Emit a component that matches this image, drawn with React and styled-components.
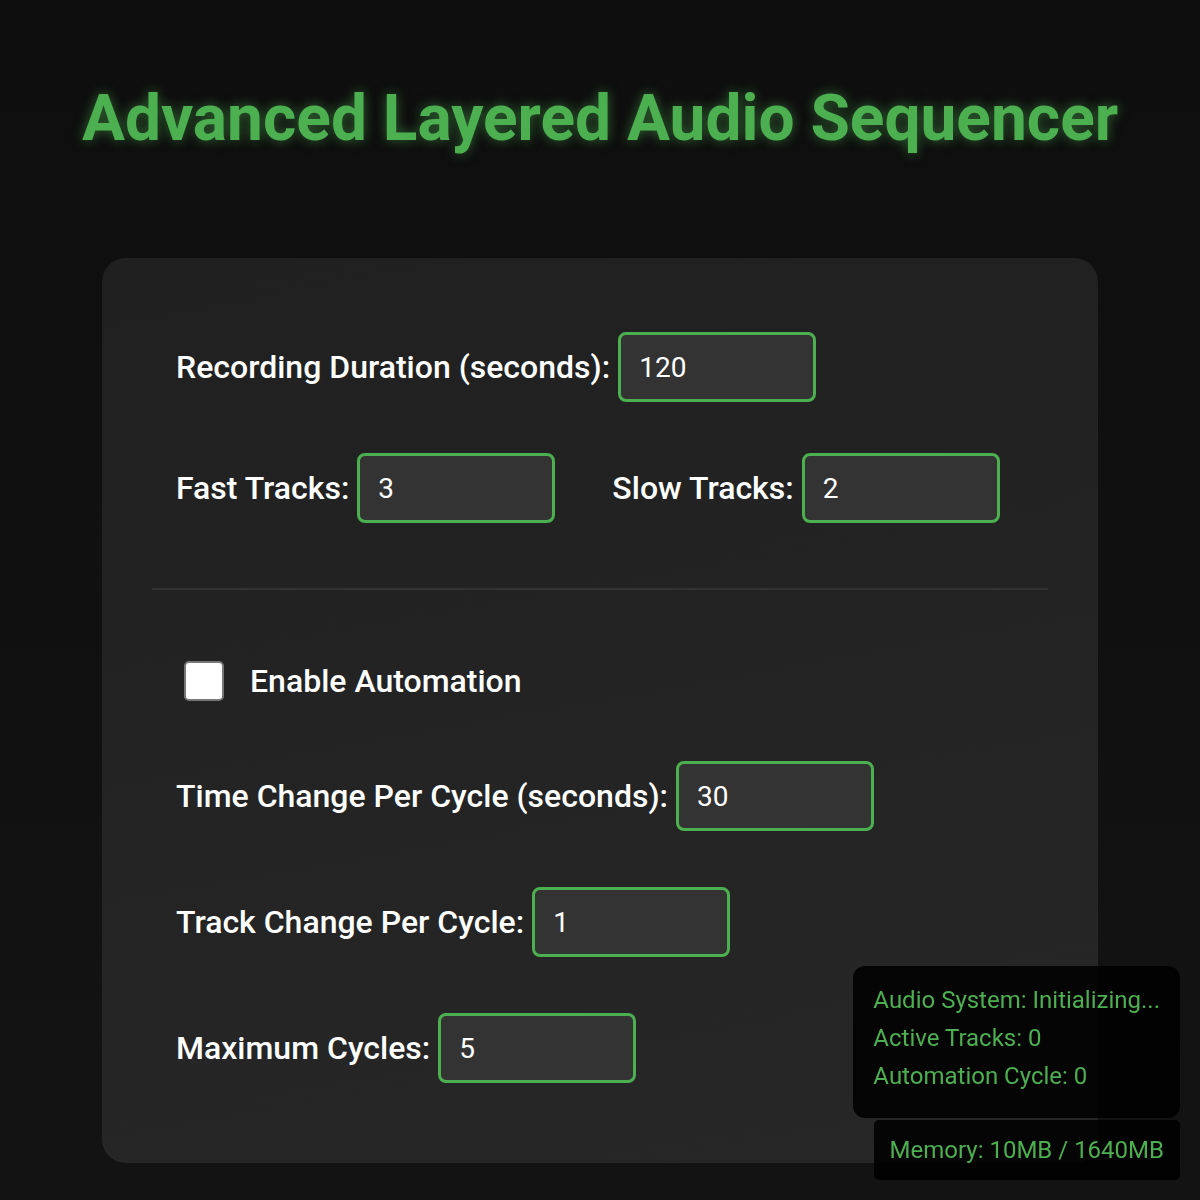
import React, { useState } from 'react'
import styled, { createGlobalStyle } from 'styled-components'

const GlobalStyle = createGlobalStyle`
  html, body {
    margin: 0;
    padding: 0;
    background: #111;
    font-family: Roboto, "Liberation Sans", sans-serif;
  }
  * { box-sizing: border-box; }
`

export default function App() {
  const [duration, setDuration] = useState('120')
  const [fast, setFast] = useState('3')
  const [slow, setSlow] = useState('2')
  const [automation, setAutomation] = useState(false)
  const [timeChange, setTimeChange] = useState('30')
  const [trackChange, setTrackChange] = useState('1')
  const [maxCycles, setMaxCycles] = useState('5')

  return (
    <Page>
      <GlobalStyle />
      <Title>Advanced Layered Audio Sequencer</Title>
      <Panel>
        <Section>
          <Row>
            <Field>
              <Label>Recording Duration (seconds):</Label>
              <NumberInput type="number" value={duration} onChange={e => setDuration(e.target.value)} />
            </Field>
          </Row>
          <Row $gap={57}>
            <Field>
              <Label>Fast Tracks:</Label>
              <NumberInput type="number" value={fast} onChange={e => setFast(e.target.value)} />
            </Field>
            <Field>
              <Label>Slow Tracks:</Label>
              <NumberInput type="number" value={slow} onChange={e => setSlow(e.target.value)} />
            </Field>
          </Row>
        </Section>
        <Divider />
        <Section $auto>
          <CheckRow>
            <Check type="checkbox" checked={automation} onChange={e => setAutomation(e.target.checked)} />
            <Label>Enable Automation</Label>
          </CheckRow>
          <Row>
            <Field>
              <Label>Time Change Per Cycle (seconds):</Label>
              <NumberInput type="number" value={timeChange} onChange={e => setTimeChange(e.target.value)} />
            </Field>
          </Row>
          <Row>
            <Field>
              <Label>Track Change Per Cycle:</Label>
              <NumberInput type="number" value={trackChange} onChange={e => setTrackChange(e.target.value)} />
            </Field>
          </Row>
          <Row>
            <Field>
              <Label>Maximum Cycles:</Label>
              <NumberInput type="number" value={maxCycles} onChange={e => setMaxCycles(e.target.value)} />
            </Field>
          </Row>
        </Section>
      </Panel>

      <StatusBox>
        <StatusLine>Audio System: Initializing...</StatusLine>
        <StatusLine>Active Tracks: 0</StatusLine>
        <StatusLine>Automation Cycle: 0</StatusLine>
      </StatusBox>
      <MemoryBox>Memory: 10MB / 1640MB</MemoryBox>
    </Page>
  )
}

const Page = styled.div`
  min-height: 1200px;
  padding-top: 81px;
  background: linear-gradient(180deg, #0e0e0e 0%, #131313 100%);
`

const Title = styled.h1`
  margin: 0 0 102px;
  text-align: center;
  font-size: 64px;
  font-weight: 700;
  color: #4caf50;
  text-shadow: 0 0 12px rgba(76, 175, 80, 0.55);
`

const Panel = styled.div`
  width: 996px;
  margin: 0 auto;
  padding: 50px 50px 80px;
  border-radius: 24px;
  background: linear-gradient(170deg, #202020 0%, #272727 100%);
`

const Section = styled.div`
  display: flex;
  flex-direction: column;
  gap: ${p => (p.$auto ? 56 : 51)}px;
  padding: ${p => (p.$auto ? '0 24px' : '24px 24px 0')};
`

const Row = styled.div`
  display: flex;
  align-items: center;
  gap: ${p => p.$gap || 0}px;
`

const Field = styled.div`
  display: flex;
  align-items: center;
  gap: 8px;
`

const Label = styled.label`
  color: #fff;
  font-size: 32px;
  font-weight: 500;
  white-space: nowrap;
`

const NumberInput = styled.input`
  width: 198px;
  height: 70px;
  padding: 0 18px;
  border: 3px solid #4caf50;
  border-radius: 8px;
  background: #333;
  color: #fff;
  font-family: Roboto, "Liberation Sans", sans-serif;
  font-size: 28px;
  outline: none;
  -moz-appearance: textfield;
  &::-webkit-outer-spin-button,
  &::-webkit-inner-spin-button {
    -webkit-appearance: none;
    margin: 0;
  }
`

const Divider = styled.div`
  height: 2px;
  background: #333;
  margin: 65px 0 71px;
`

const CheckRow = styled.div`
  display: flex;
  align-items: center;
  gap: 26px;
  padding-left: 8px;
  margin-bottom: 4px;
`

const Check = styled.input`
  appearance: none;
  width: 40px;
  height: 40px;
  margin: 0;
  border: 2px solid #777;
  border-radius: 5px;
  background: #fff;
  cursor: pointer;
  &:checked {
    background: #4caf50;
    border-color: #4caf50;
  }
`

const StatusBox = styled.div`
  position: fixed;
  right: 20px;
  bottom: 82px;
  padding: 15px 20px 23px;
  border-radius: 12px;
  background: rgba(0, 0, 0, 0.85);
  color: #4caf50;
  font-size: 24px;
`

const StatusLine = styled.div`
  line-height: 38px;
`

const MemoryBox = styled.div`
  position: fixed;
  right: 20px;
  bottom: 20px;
  height: 60px;
  padding: 0 16px;
  display: flex;
  align-items: center;
  border-radius: 5px;
  background: rgba(0, 0, 0, 0.85);
  color: #4caf50;
  font-size: 24px;
`
